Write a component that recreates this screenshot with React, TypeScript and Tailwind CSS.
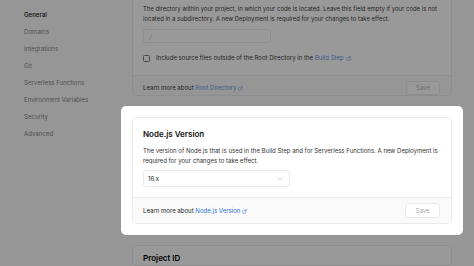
import React from 'react';
import { ChevronDown, ExternalLink } from 'lucide-react';

const navItems = [
  'General',
  'Domains',
  'Integrations',
  'Git',
  'Serverless Functions',
  'Environment Variables',
  'Security',
  'Advanced',
];

export default function App() {
  return (
    <div className="flex h-[266px] w-[474px] overflow-hidden bg-[#969696] font-['Inter','Noto_Sans',sans-serif]">
      {/* Sidebar (dimmed) */}
      <nav className="flex w-[132px] shrink-0 flex-col pl-[24px] pt-[6px]">
        {navItems.map((item, i) => (
          <div
            key={item}
            className={`h-[17px] text-[6.1px] leading-[17px] ${
              i === 0 ? 'font-medium text-[#0a0a0a]' : 'text-[#505050]'
            }`}
          >
            {item}
          </div>
        ))}
      </nav>

      {/* Main column */}
      <main className="mt-[-1px] flex w-[320px] shrink-0 flex-col gap-[21px]">
        {/* Root Directory card (dimmed, title scrolled out of view) */}
        <section className="overflow-hidden rounded-b-[5px] border border-t-0 border-[#8d8d8d] bg-[#999999]">
          <div className="pb-[11px] pl-[10px] pr-[4px] pt-[5px]">
            <p className="text-[5.95px] leading-[10px] text-[#262626]">
              The directory within your project, in which your code is located. Leave this field empty if your code is not
              located in a subdirectory. A new Deployment is required for your changes to take effect.
            </p>
            <div className="mt-[5px] flex h-[14px] w-[128px] items-center rounded-[3px] border border-[#8d8d8d] px-[4px] text-[6px] text-[#6a6a6a]">
              ./
            </div>
            <label className="mt-[9px] flex h-[12px] items-center gap-[6px] text-[6.05px] text-[#262626]">
              <span className="h-[7px] w-[7px] rounded-[1.5px] border border-[#4a4a4a]" />
              <span>
                Include source files outside of the Root Directory in the{' '}
                <span className="text-[#3f5a8a]">Build Step</span>
                <ExternalLink className="ml-[2px] inline h-[5px] w-[5px] text-[#3f5a8a]" />.
              </span>
            </label>
          </div>
          <div className="flex h-[24px] items-center justify-between border-t border-[#8d8d8d] bg-[#969696] pl-[10px] pr-[11px]">
            <span className="text-[6.05px] text-[#1f1f1f]">
              Learn more about <span className="text-[#3f5a8a]">Root Directory</span>
              <ExternalLink className="ml-[2px] inline h-[5px] w-[5px] text-[#3f5a8a]" />
            </span>
            <button className="flex h-[14px] w-[34px] items-center justify-center rounded-[3px] border border-[#8d8d8d] bg-[#999999] text-[6px] text-[#6e6e6e]">
              Save
            </button>
          </div>
        </section>

        {/* Highlighted Node.js Version card */}
        <div className="-mx-[11px] -my-[11px] rounded-[5px] bg-white p-[11px]">
          <section className="overflow-hidden rounded-[5px] border border-[#eaeaea] bg-white">
            <div className="px-[10px] pb-[10px] pt-[9px]">
              <h2 className="text-[8px] font-semibold leading-[14px] text-[#111]">Node.js Version</h2>
              <p className="mt-[5px] text-[6.05px] leading-[9.5px] text-[#333]">
                The version of Node.js that is used in the Build Step and for Serverless Functions. A new Deployment is
                required for your changes to take effect.
              </p>
              <div className="mt-[5px] flex h-[17px] w-[147px] items-center justify-between rounded-[3px] border border-[#eaeaea] pl-[4px] pr-[6px] text-[6.05px] text-[#222]">
                <span>16.x</span>
                <ChevronDown className="h-[6px] w-[6px] text-[#888]" strokeWidth={2} />
              </div>
            </div>
            <div className="flex h-[26px] items-center justify-between border-t border-[#eaeaea] bg-[#fafafa] pl-[10px] pr-[11px]">
              <span className="text-[6.05px] text-[#222]">
                Learn more about <span className="text-[#2e6fd8]">Node.js Version</span>
                <ExternalLink className="ml-[2px] inline h-[5px] w-[5px] text-[#2e6fd8]" />
              </span>
              <button className="flex h-[15px] w-[35px] items-center justify-center rounded-[3px] border border-[#eaeaea] bg-white text-[6px] text-[#aaa]">
                Save
              </button>
            </div>
          </section>
        </div>

        {/* Project ID card (dimmed) */}
        <section className="rounded-[5px] border border-[#8d8d8d] bg-[#999999] px-[10px] pt-[5px]">
          <h2 className="text-[8px] font-semibold leading-[14px] text-black">Project ID</h2>
        </section>
      </main>
    </div>
  );
}
